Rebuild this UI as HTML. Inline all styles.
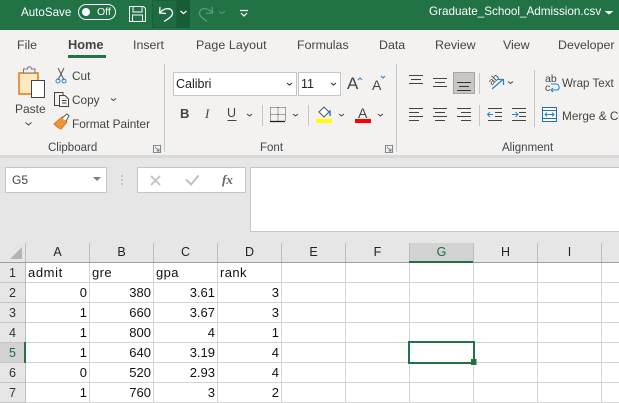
<!DOCTYPE html>
<html><head><meta charset="utf-8">
<style>
html,body{margin:0;padding:0}
body{width:619px;height:403px;overflow:hidden;position:relative;background:#fff;font-family:"Liberation Sans",sans-serif}
div,span.t{position:absolute}
.t{white-space:nowrap;line-height:16px;color:#444}
.r{font-size:11.8px;color:#444}
.tab{font-size:12.4px;color:#444}
.h{font-size:12.5px;color:#222;width:65px;text-align:center;top:244px;line-height:16px}
.rh{font-size:12.5px;color:#333;left:0;width:25px;text-align:center;line-height:16px}
.c{font-size:13px;color:#111;line-height:16px;white-space:nowrap}
.n{text-align:right;width:60px}
svg{position:absolute;left:0;top:0}
</style></head><body>
<div style="left:0;top:0;width:619px;height:30px;background:#217346"></div>
<div style="left:152px;top:0;width:25px;height:28px;background:#1f6b41;box-shadow:inset 0 0 0 1px #1c5f3a"></div>
<div style="left:177px;top:0;width:13px;height:28px;background:#185c37"></div>
<span class="t" style="left:21px;top:5px;font-size:11.6px;color:#fff">AutoSave</span>
<span class="t" style="left:97px;top:4px;font-size:10.5px;color:#fff">Off</span>
<span class="t" style="left:429px;top:4px;font-size:11.7px;color:#fff">Graduate_School_Admission.csv</span>

<div style="left:0;top:30px;width:619px;height:126px;background:#f3f2f1"></div>
<div style="left:0;top:156px;width:619px;height:87px;background:#e6e6e6"></div>
<div style="left:0;top:155px;width:619px;height:3px;background:#d9d9d9"></div>

<span class="t tab" style="left:17px;top:37px">File</span>
<span class="t tab" style="left:68px;top:37px;font-weight:bold;color:#444;font-size:12.8px">Home</span>
<div style="left:68px;top:55px;width:38px;height:3px;background:#217346"></div>
<span class="t tab" style="left:133px;top:37px">Insert</span>
<span class="t tab" style="left:196px;top:37px;letter-spacing:.1px">Page Layout</span>
<span class="t tab" style="left:297px;top:37px">Formulas</span>
<span class="t tab" style="left:379px;top:37px">Data</span>
<span class="t tab" style="left:435px;top:37px">Review</span>
<span class="t tab" style="left:503px;top:37px">View</span>
<span class="t tab" style="left:558px;top:37px">Developer</span>

<span class="t r" style="left:15px;top:101px;font-size:12px">Paste</span>
<span class="t r" style="left:72px;top:68px">Cut</span>
<span class="t r" style="left:72px;top:92px">Copy</span>
<span class="t r" style="left:72px;top:116px">Format Painter</span>
<span class="t r" style="left:48px;top:140px;font-size:11.5px">Clipboard</span>
<span class="t r" style="left:260px;top:140px;font-size:11.5px">Font</span>
<span class="t r" style="left:502px;top:140px;font-size:11.5px">Alignment</span>
<span class="t r" style="left:562px;top:76px;font-size:11.6px">Wrap Text</span>
<span class="t r" style="left:562px;top:108px">Merge &amp; Center</span>

<div style="left:173px;top:72px;width:122px;height:22px;background:#fff;border:1px solid #c6c6c6"></div>
<div style="left:298px;top:72px;width:41px;height:22px;background:#fff;border:1px solid #c6c6c6"></div>
<span class="t" style="left:176px;top:76px;font-size:12.5px;color:#222">Calibri</span>
<span class="t" style="left:301px;top:76px;font-size:12.5px;color:#222">11</span>
<div style="left:453px;top:72px;width:20px;height:20px;background:#c8c6c4;border:1px solid #a6a6a6"></div>

<span class="t" style="left:180px;top:106px;font-size:13px;font-weight:bold;color:#444">B</span>
<span class="t" style="left:205px;top:106px;font-size:13px;font-style:italic;font-family:'Liberation Serif',serif;color:#444">I</span>
<span class="t" style="left:227px;top:105px;font-size:12.5px;color:#444">U</span>
<span class="t" style="left:347px;top:76px;font-size:17px;color:#444">A</span>
<span class="t" style="left:372px;top:77px;font-size:14px;color:#444">A</span>
<span class="t" style="left:358px;top:105px;font-size:14px;color:#444">A</span>
<span class="t" style="left:545px;top:75px;font-size:10.5px;line-height:9px;color:#444">ab<br>c</span>

<svg width="619" height="403" fill="none">
<!-- toggle -->
<rect x="78.500" y="4.500" width="37" height="15" rx="7.500" stroke="#fff"/>
<circle cx="86" cy="12" r="4" fill="#fff"/>
<!-- save -->
<path d="M130 6.500H143.500L145.500 8.500V21.500H129.500V6.500ZM133 7V12H142V7M132.500 21V15H142.500V21" stroke="#fff"/>
<!-- undo -->
<path d="M160 7L159.500 13L166 13.500M160 12.500C164 8 170 7.500 172 11C174 15 170 18 164 21.500" stroke="#fff" stroke-width="1.300"/>
<path d="M180.500 11L183.500 13.500L186.500 11" stroke="#fff" stroke-width="1.300"/>
<!-- redo -->
<path d="M212 7L212.500 13L206 13.500M212 12.500C208 8 202 7.500 200 11C198 15 202 18 207 21.500" stroke="#5d9b79" stroke-width="1.300"/>
<path d="M219 11L222 13.500L225 11" stroke="#5d9b79"/>
<path d="M240 10.500H248M241 13L244 16L247 13" stroke="#fff" stroke-width="1.200"/>
<path d="M606 11.500L609 14L612 11.500Z" fill="#fff" stroke="#fff"/>
<!-- separators -->
<path d="M164.500 64V152M396.500 64V152M534.500 70V127M479.500 73V94M479.500 105V126M262.500 105V126M308.500 105V126" stroke="#c8c6c4"/>
<!-- paste -->
<rect x="19" y="73" width="19" height="21" fill="#fde9bd" stroke="#e07a10" stroke-width="1.500"/>
<path d="M23.500 73V69H27.500C27.500 66 31 66 31.500 69H35V73Z" fill="#f3f2f1" stroke="#777"/>
<rect x="31.500" y="80.500" width="13" height="17" fill="#fff" stroke="#444"/>
<path d="M25.500 122.500L28.500 125L31.500 122.500" stroke="#444"/>
<!-- cut -->
<path d="M58 68L64 80M64 68L58 80" stroke="#555"/>
<circle cx="58" cy="81" r="2" stroke="#1f86d6"/><circle cx="64" cy="81" r="2" stroke="#1f86d6"/>
<!-- copy -->
<path d="M59.500 105.500H54.500V92.500H63V95M59.500 95.500H65L68.500 99V106.500H59.500ZM62 100.500H66.500M62 103H66.500" stroke="#444"/>
<path d="M111 98.500L113.500 100.500L116 98.500" stroke="#444"/>
<!-- painter -->
<path d="M54 124L62 117L67 122L61 129C58 128 56 126 54 124Z" fill="#f0943a" stroke="#d9761f"/>
<path d="M62 118L67 114L69 116L66 121" fill="#fff" stroke="#555"/>
<!-- dialog launchers -->
<path d="M153.500 145.500H160.500V152.500H153.500ZM155 147L159 151M159 148.500V151H156.500" stroke="#666" stroke-width=".8"/>
<path d="M385.500 145.500H392.500V152.500H385.500ZM387 147L391 151M391 148.500V151H388.500" stroke="#666" stroke-width=".8"/>
<!-- combo chevrons -->
<path d="M287 83L289.500 85L292 83M331 83L333.500 85L336 83" stroke="#333" stroke-width="1.100"/>
<!-- grow/shrink carets -->
<path d="M358 80L360 78L362 80" stroke="#1f86d6"/>
<path d="M381 76L383 78L385 76" stroke="#1f86d6"/>
<!-- underline and font row -->
<path d="M227.500 120.500H236.500" stroke="#444"/>
<path d="M247 114L249.500 116L252 114M293 114L295.500 116L298 114M339 114L341.500 116L344 114M378 114L380.500 116L383 114" stroke="#444"/>
<!-- borders -->
<path d="M270.500 107.500H285.500M270.500 114.500H285.500M270.500 107.500V121M285.500 107.500V121M278 107.500V121" stroke="#555" stroke-dasharray="1 1"/>
<path d="M270 121.500H285" stroke="#222" stroke-width="1.300"/>
<!-- fill -->
<path d="M319 112L324 107L329 112L324 117Z" fill="#fff" stroke="#555"/>
<path d="M330 116V111L328 112.500" stroke="#1f6fc0" stroke-width="1.300"/>
<rect x="316" y="119" width="16" height="4" fill="#ffff00"/>
<rect x="355" y="119" width="16" height="4" fill="#ff0000"/>
<!-- align top row -->
<path d="M409 75.500H423M411 79.500H421M409 83.500H423" stroke="#444"/>
<path d="M433 78.500H447M435 82.500H445M433 86.500H447" stroke="#444"/>
<path d="M457 82.500H471M459 86.500H469M457 90.500H471" stroke="#333"/>
<!-- align lower row -->
<path d="M409 108.500H423M409 112.500H419M409 116.500H423M409 120.500H419" stroke="#444"/>
<path d="M433 108.500H447M435 112.500H445M433 116.500H447M435 120.500H445" stroke="#444"/>
<path d="M457 108.500H471M461 112.500H471M457 116.500H471M461 120.500H471" stroke="#444"/>
<path d="M488 108.500H502M495 112.500H502M495 116.500H502M488 120.500H502" stroke="#444"/>
<path d="M488 114.500H493M490 112L487.500 114.500L490 117" stroke="#1f86d6"/>
<path d="M512 108.500H526M519 112.500H526M519 116.500H526M512 120.500H526" stroke="#444"/>
<path d="M512 114.500H518M515.500 112L518 114.500L515.500 117" stroke="#1f86d6"/>
<!-- orientation -->
<text x="488" y="84" font-family="Liberation Sans" font-size="10" fill="#444" transform="rotate(-45 492 80)">ab</text>
<path d="M492 89L503 79.500M498 79.500H503.500V85" stroke="#1f86d6" stroke-width="1.200"/>
<path d="M508 81.500L510.500 83.500L513 81.500" stroke="#444"/>
<!-- wrap -->
<path d="M552 90H557C560 90 560 84 556 84H551M553 88L551 90L553 92" stroke="#1f86d6" stroke-width="1.100"/>
<!-- merge -->
<rect x="542.500" y="107.500" width="14" height="14" stroke="#1f6fa8" fill="#fff"/>
<path d="M542 110.500H557M542 118.500H557" stroke="#1f6fa8"/>
<path d="M545 114.500H554M547 112.500L545 114.500L547 116.500M552 112.500L554 114.500L552 116.500" stroke="#1f86d6"/>
</svg>

<!-- formula bar -->
<div style="left:5px;top:167px;width:100px;height:24px;background:#fff;border:1px solid #c6c6c6"></div>
<span class="t" style="left:12px;top:172px;font-size:12px;color:#444">G5</span>
<div style="left:137px;top:167px;width:107px;height:24px;background:#fff;border:1px solid #c6c6c6"></div>
<div style="left:250px;top:167px;width:369px;height:65px;background:#fff;border:1px solid #c6c6c6;border-right:0;box-sizing:border-box"></div>
<span class="t" style="left:222px;top:172px;font-size:13px;font-style:italic;font-family:'Liberation Serif',serif;color:#666;font-weight:bold">fx</span>
<svg width="619" height="403" fill="none">
<path d="M93 177H101L97 181Z" fill="#7f7f7f"/>
<path d="M122 175.500V176.500M122 179.500V180.500M122 183.500V184.500" stroke="#aaa" stroke-width="2"/>
<path d="M151 176L160 185M160 176L151 185" stroke="#c0c0c0" stroke-width="1.800"/>
<path d="M186 179.500L191 184.500L198.500 175.500" stroke="#c0c0c0" stroke-width="2"/>
</svg>

<!-- grid -->
<div style="left:0;top:243px;width:619px;height:19px;background:#e6e6e6"></div>
<div style="left:0;top:262px;width:25px;height:141px;background:#e6e6e6"></div>
<div style="left:409px;top:243px;width:64px;height:19px;background:#d2d2d2"></div>
<div style="left:0;top:342px;width:25px;height:20px;background:#d2d2d2"></div>
<svg width="619" height="403" fill="none">
<path d="M22 247V259H10Z" fill="#b4b4b4"/>
<path d="M89.500 262V403M153.500 262V403M217.500 262V403M281.500 262V403M345.500 262V403M409.500 262V403M473.500 262V403M537.500 262V403M601.500 262V403" stroke="#d4d4d4"/>
<path d="M25 282.500H619M25 302.500H619M25 322.500H619M25 342.500H619M25 362.500H619M25 382.500H619M25 402.500H619" stroke="#d4d4d4"/>
<path d="M0 282.500H25M0 302.500H25M0 322.500H25M0 342.500H25M0 362.500H25M0 382.500H25M0 402.500H25" stroke="#c4c4c4"/>
<path d="M25.500 243V403M89.500 243V262M153.500 243V262M217.500 243V262M281.500 243V262M345.500 243V262M409.500 243V262M473.500 243V262M537.500 243V262M601.500 243V262" stroke="#bdbdbd"/>
<path d="M0 262.500H619" stroke="#9e9e9e"/>
<rect x="409" y="261" width="64" height="2" fill="#217346"/>
<rect x="24" y="342" width="2" height="21" fill="#217346"/>
<rect x="409" y="342" width="65" height="21" stroke="#217346" stroke-width="2"/>
<rect x="471" y="359" width="5.500" height="6" fill="#217346"/>
</svg>

<div class="h" style="left:25px">A</div><div class="h" style="left:89px">B</div><div class="h" style="left:153px">C</div><div class="h" style="left:217px">D</div><div class="h" style="left:281px">E</div><div class="h" style="left:345px">F</div><div class="h" style="left:409px;color:#1f6b41">G</div><div class="h" style="left:473px">H</div><div class="h" style="left:537px">I</div>
<div class="rh" style="top:265px">1</div><div class="rh" style="top:285px">2</div><div class="rh" style="top:305px">3</div><div class="rh" style="top:325px">4</div><div class="rh" style="top:345px;color:#1f6b41">5</div><div class="rh" style="top:365px">6</div><div class="rh" style="top:385px">7</div>

<div class="c" style="left:28px;top:265px;letter-spacing:.6px">admit</div>
<div class="c" style="left:92px;top:265px;letter-spacing:.4px">gre</div>
<div class="c" style="left:156px;top:265px;letter-spacing:.4px">gpa</div>
<div class="c" style="left:220px;top:265px;letter-spacing:.4px">rank</div>

<div class="c n" style="left:27px;top:285px">0</div><div class="c n" style="left:91px;top:285px">380</div><div class="c n" style="left:155px;top:285px">3.61</div><div class="c n" style="left:219px;top:285px">3</div>
<div class="c n" style="left:27px;top:305px">1</div><div class="c n" style="left:91px;top:305px">660</div><div class="c n" style="left:155px;top:305px">3.67</div><div class="c n" style="left:219px;top:305px">3</div>
<div class="c n" style="left:27px;top:325px">1</div><div class="c n" style="left:91px;top:325px">800</div><div class="c n" style="left:155px;top:325px">4</div><div class="c n" style="left:219px;top:325px">1</div>
<div class="c n" style="left:27px;top:345px">1</div><div class="c n" style="left:91px;top:345px">640</div><div class="c n" style="left:155px;top:345px">3.19</div><div class="c n" style="left:219px;top:345px">4</div>
<div class="c n" style="left:27px;top:365px">0</div><div class="c n" style="left:91px;top:365px">520</div><div class="c n" style="left:155px;top:365px">2.93</div><div class="c n" style="left:219px;top:365px">4</div>
<div class="c n" style="left:27px;top:385px">1</div><div class="c n" style="left:91px;top:385px">760</div><div class="c n" style="left:155px;top:385px">3</div><div class="c n" style="left:219px;top:385px">2</div>
</body></html>
